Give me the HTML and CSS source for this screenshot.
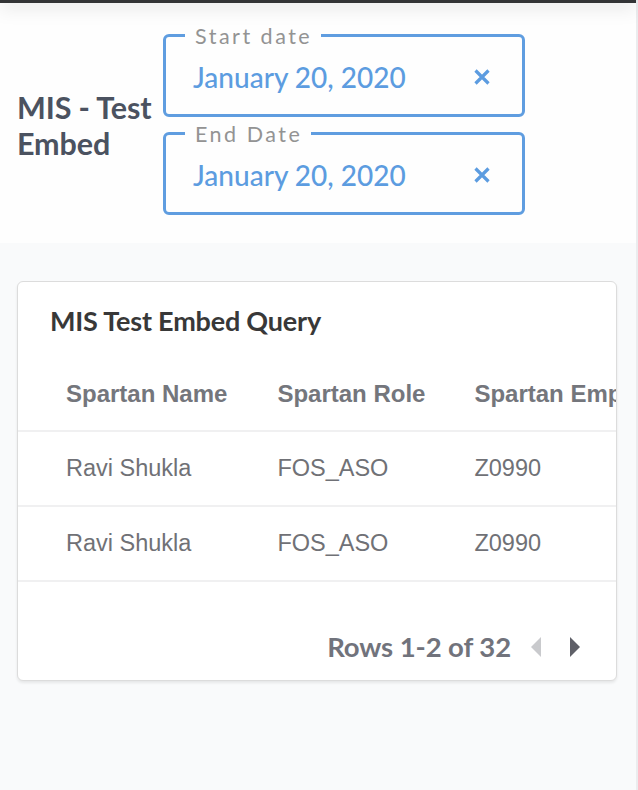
FILE: index.html
```html
<!DOCTYPE html>
<html lang="en">
<head>
<meta charset="utf-8">
<title>MIS - Test Embed</title>
<link rel="stylesheet" href="styles.css">
</head>
<body>
<div class="page">
  <div class="topbar"></div>
  <header class="header">
    <h1 class="title">MIS - Test Embed</h1>
    <div class="filters">
      <fieldset class="date-field">
        <legend class="date-label">Start date</legend>
        <div class="date-row">
          <span class="date-value">January 20, 2020</span>
          <svg class="clear" width="16" height="16" viewBox="0 0 16 16"><path d="M1.5 1.5 L14.5 14.5 M14.5 1.5 L1.5 14.5" stroke="currentColor" stroke-width="3.2"/></svg>
        </div>
      </fieldset>
      <fieldset class="date-field">
        <legend class="date-label">End Date</legend>
        <div class="date-row">
          <span class="date-value">January 20, 2020</span>
          <svg class="clear" width="16" height="16" viewBox="0 0 16 16"><path d="M1.5 1.5 L14.5 14.5 M14.5 1.5 L1.5 14.5" stroke="currentColor" stroke-width="3.2"/></svg>
        </div>
      </fieldset>
    </div>
  </header>
  <main class="main">
    <section class="card">
      <h2 class="card-title">MIS Test Embed Query</h2>
      <div class="table-wrap">
        <table class="grid">
          <thead>
            <tr><th>Spartan Name</th><th>Spartan Role</th><th>Spartan Employee ID</th></tr>
          </thead>
          <tbody>
            <tr><td>Ravi Shukla</td><td>FOS_ASO</td><td>Z0990</td></tr>
            <tr><td>Ravi Shukla</td><td>FOS_ASO</td><td>Z0990</td></tr>
          </tbody>
        </table>
      </div>
      <div class="pager">
        <span class="pager-text">Rows 1-2 of 32</span>
        <svg class="arrow prev" width="10" height="20" viewBox="0 0 10 20"><path d="M10 0 L0 10 L10 20 Z" fill="#c9cacd"/></svg>
        <svg class="arrow next" width="10" height="20" viewBox="0 0 10 20"><path d="M0 0 L10 10 L0 20 Z" fill="#5f6068"/></svg>
      </div>
    </section>
  </main>
</div>
</body>
</html>
```
FILE: styles.css
```css
* { box-sizing: border-box; }
html, body { margin: 0; padding: 0; }
body {
  background: #f9fafb;
  font-family: Lato, "Open Sans", sans-serif;
  width: 638px;
  height: 790px;
  overflow: hidden;
}
.page {
  min-height: 790px;
  border-right: 2px solid #ebecee;
  background: #f9fafb;
}
.topbar {
  height: 3px;
  background: #333436;
  box-shadow: 0 2px 18px rgba(0,0,0,0.35);
  position: relative;
  z-index: 2;
}
.header {
  background: #fefefe;
  height: 240px;
  display: flex;
  align-items: center;
  padding: 0 0 8px 17px;
}
.title {
  margin: 0;
  width: 146px;
  font-size: 30.5px;
  line-height: 36px;
  font-weight: 700;
  color: #4b5260;
  padding-top: 12px;
  letter-spacing: -0.1px;
}
.filters {
  display: flex;
  flex-direction: column;
  gap: 5px;
}
.date-field {
  margin: 0;
  width: 362px;
  border: 3px solid #5f9de0;
  border-radius: 6px;
  padding: 0 32px 4px 19px;
}
.date-label {
  padding: 0 9px 0 10px;
  font-size: 21.5px;
  line-height: 24px;
  letter-spacing: 2.5px;
  color: #939393;
}
.date-row {
  height: 62px;
  display: flex;
  align-items: center;
  justify-content: space-between;
  padding-left: 8px;
  padding-bottom: 3px;
  color: #5c9ce0;
}
.date-value {
  font-size: 28px;
  font-weight: 500;
}
.clear { display: block; }
.main {
  padding: 38px 19px 0 17px;
}
.card {
  background: #fff;
  border: 1px solid #dcdcdc;
  border-radius: 6px;
  box-shadow: 0 2px 3px rgba(0,0,0,0.08);
  overflow: hidden;
  height: 400px;
}
.card-title {
  margin: 0;
  padding: 24px 0 0 32px;
  font-size: 27px;
  line-height: 30px;
  font-weight: 700;
  color: #383838;
  letter-spacing: -0.2px;
}
.table-wrap {
  margin-top: 22px;
  overflow: hidden;
}
.grid {
  border-collapse: collapse;
  white-space: nowrap;
  font-family: "Liberation Sans", Arial, sans-serif;
  font-size: 23.5px;
}
.grid th, .grid td {
  text-align: left;
  padding: 0 25px 0 24px;
  height: 75px;
  border-bottom: 2px solid #f0f0f1;
}
.grid th:first-child, .grid td:first-child { padding-left: 48px; }
.grid th {
  font-weight: 700;
  font-size: 24px;
  color: #74767c;
  height: 73px;
}
.grid th:first-child { padding-right: 26px; }
.grid td {
  color: #707176;
}
.pager {
  display: flex;
  align-items: center;
  justify-content: flex-end;
  padding: 48px 36px 0 0;
}
.pager-text {
  font-size: 27.5px;
  font-weight: 700;
  color: #71737c;
  margin-right: 20px;
  letter-spacing: -0.1px;
}
.arrow { display: block; }
.arrow.next { margin-left: 29px; }
```
